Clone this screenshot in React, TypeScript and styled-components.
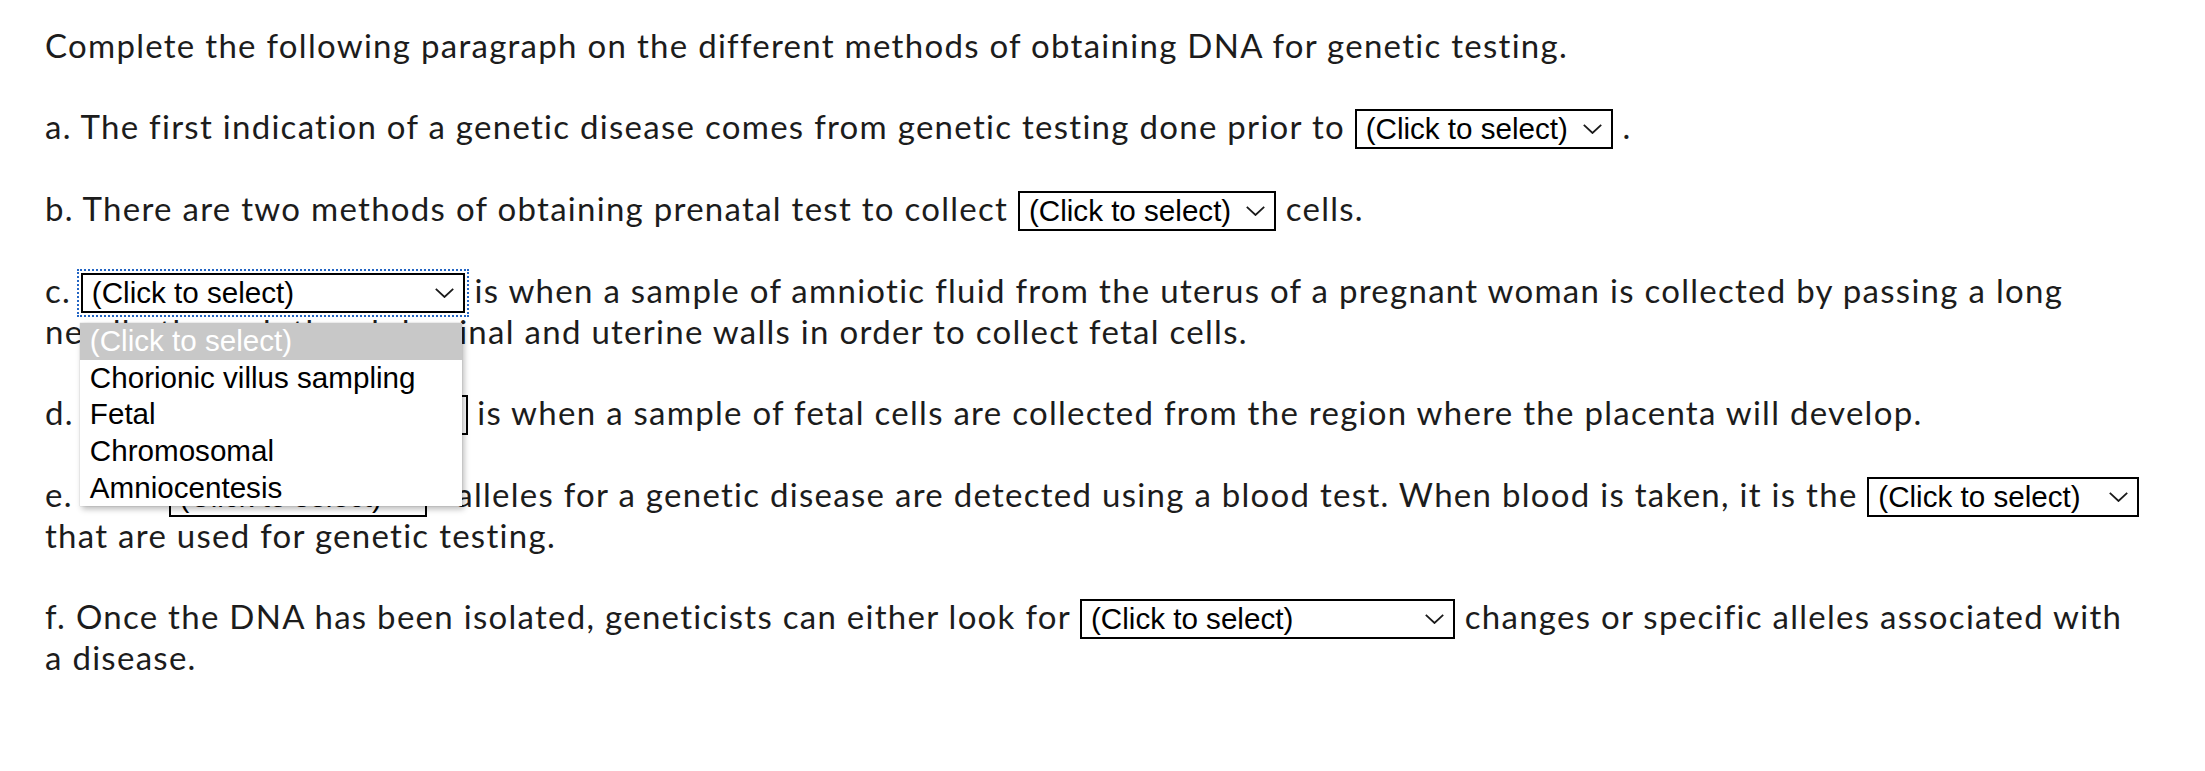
import React from 'react';
import styled, { createGlobalStyle } from 'styled-components';

const GlobalStyle = createGlobalStyle`
  html, body {
    margin: 0;
    padding: 0;
    background: #ffffff;
  }
`;

const Page = styled.div`
  padding: 25px 0 0 45px;
  font-family: Lato, 'Noto Sans', sans-serif;
  font-size: 33px;
  letter-spacing: 1.28px;
  font-variant-ligatures: none;
  line-height: 40px;
  color: #1c1c1c;
`;

const Para = styled.p`
  margin: 0 0 41px;
  white-space: nowrap;
`;

interface SelectProps {
  $width: number;
  $focused?: boolean;
  $before?: number;
  $after?: number;
}

const SelectBox = styled.span<SelectProps>`
  position: relative;
  display: inline-flex;
  align-items: center;
  box-sizing: border-box;
  width: ${(p) => p.$width}px;
  height: 40px;
  margin: -2px ${(p) => p.$after ?? 0}px -2px ${(p) => p.$before ?? 0}px;
  padding: 0 9px;
  border: 2px solid #000;
  background: #fff;
  font-family: 'Liberation Sans', Arial, sans-serif;
  font-size: 29.6px;
  letter-spacing: normal;
  line-height: 36px;
  color: #000;
  vertical-align: baseline;
  outline: ${(p) => (p.$focused ? '2px dotted #2466c4' : 'none')};
  outline-offset: 2px;
`;

const SelectText = styled.span`
  flex: 1;
`;

const Chevron = styled.svg`
  flex: none;
  width: 19px;
  height: 10px;
`;

const Menu = styled.ul`
  position: absolute;
  left: -3px;
  top: 48px;
  width: 382px;
  margin: 0;
  padding: 0;
  list-style: none;
  background: #fff;
  box-shadow: 2px 3px 6px rgba(0, 0, 0, 0.28), 0 0 1px rgba(0, 0, 0, 0.25);
  z-index: 10;
`;

const Option = styled.li<{ $active?: boolean }>`
  height: 36.7px;
  padding-left: 10px;
  line-height: 36.7px;
  font-family: 'Liberation Sans', Arial, sans-serif;
  font-size: 29.6px;
  background: ${(p) => (p.$active ? '#c8c8c8' : '#fff')};
  color: ${(p) => (p.$active ? '#fff' : '#000')};
`;

const options = [
  '(Click to select)',
  'Chorionic villus sampling',
  'Fetal',
  'Chromosomal',
  'Amniocentesis',
];

const Select = ({
  width,
  focused,
  open,
  before,
  after,
}: {
  width: number;
  focused?: boolean;
  open?: boolean;
  before?: number;
  after?: number;
}) => (
  <SelectBox $width={width} $focused={focused} $before={before} $after={after}>
    <SelectText>(Click to select)</SelectText>
    <Chevron viewBox="0 0 19 10">
      <polyline points="0.8,0.8 9.5,9 18.2,0.8" fill="none" stroke="#1a1a1a" strokeWidth="1.8" />
    </Chevron>
    {open && (
      <Menu>
        {options.map((o, i) => (
          <Option key={o} $active={i === 0}>
            {o}
          </Option>
        ))}
      </Menu>
    )}
  </SelectBox>
);

export default function App() {
  return (
    <>
      <GlobalStyle />
      <Page>
        <Para>Complete the following paragraph on the different methods of obtaining DNA for genetic testing.</Para>
        <Para>
          a. The first indication of a genetic disease comes from genetic testing done prior to <Select width={258} /> .
        </Para>
        <Para>
          b. There are two methods of obtaining prenatal test to collect <Select width={258} /> cells.
        </Para>
        <Para>
          c. <Select width={384} focused open /> is when a sample of amniotic fluid from the uterus of a pregnant woman is
          collected by passing a long
          <br />
          needle through the abdominal and uterine walls in order to collect fetal cells.
        </Para>
        <Para>
          d. <Select width={384} /> is when a sample of fetal cells are collected from the region where the placenta will
          develop.
        </Para>
        <Para>
          e. <Select width={258} before={86} after={20} /> alleles for a genetic disease are detected using a blood test.
          When blood is taken, it is the <Select width={272} />
          <br />
          that are used for genetic testing.
        </Para>
        <Para>
          f. Once the DNA has been isolated, geneticists can either look for <Select width={375} /> changes or specific
          alleles associated with
          <br />a disease.
        </Para>
      </Page>
    </>
  );
}
